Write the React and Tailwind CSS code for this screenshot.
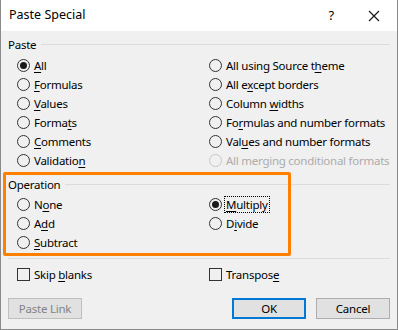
import React from "react";

const U = ({ children }) => <span className="underline underline-offset-[2px] decoration-[1px]">{children}</span>;

function Radio({ children, checked, disabled, focus }) {
  return (
    <div className="flex items-center h-[19px] whitespace-nowrap">
      <div
        className={
          "w-[13px] h-[13px] rounded-full border flex items-center justify-center shrink-0 " +
          (disabled ? "border-[#c8c8c8]" : "border-[#333333]")
        }
      >
        {checked && <div className="w-[7px] h-[7px] rounded-full bg-[#1a1a1a]" />}
      </div>
      <span
        className={
          "leading-[15px] " +
          (disabled ? "text-[#acacac] " : "text-black ") +
          (focus ? "outline outline-1 outline-dotted outline-black px-[1px] ml-[3px]" : "ml-[4px]")
        }
      >
        {children}
      </span>
    </div>
  );
}

function Check({ children }) {
  return (
    <div className="flex items-center h-[19px] whitespace-nowrap">
      <div className="w-[13px] h-[13px] border border-[#333333] shrink-0" />
      <span className="ml-[4px] leading-[15px]">{children}</span>
    </div>
  );
}

function GroupLabel({ children }) {
  return (
    <div className="flex items-center h-[18px] pl-[7px] pr-[7px]">
      <span className="leading-[15px]">{children}</span>
      <div className="flex-1 h-px bg-[#dcdcdc] ml-[5px]" />
    </div>
  );
}

export default function App() {
  return (
    <div
      className="relative w-[398px] h-[330px] bg-[#f0f0f0] border-x border-b border-[#8a8a8a] text-[11.5px] tracking-[-0.25px] text-black flex flex-col overflow-hidden"
      style={{ fontFamily: '"Noto Sans", "Open Sans", sans-serif' }}
    >
      {/* Title bar */}
      <div className="h-[31px] bg-white flex items-center shrink-0">
        <span className="ml-[8px] text-[12.5px] tracking-normal">Paste Special</span>
        <div className="flex-1" />
        <span className="text-[13px] mr-[34px]">?</span>
        <svg width="12" height="12" viewBox="0 0 12 12" className="mr-[17px]">
          <path d="M1 1 L11 11 M11 1 L1 11" stroke="#111" strokeWidth="1.1" fill="none" />
        </svg>
      </div>

      <div className="mt-[4px]">
        <GroupLabel>Paste</GroupLabel>
      </div>
      <div className="mt-[3px] grid grid-cols-[192px_1fr] pl-[16px]">
        <div className="flex flex-col">
          <Radio checked><U>A</U>ll</Radio>
          <Radio><U>F</U>ormulas</Radio>
          <Radio><U>V</U>alues</Radio>
          <Radio>Forma<U>t</U>s</Radio>
          <Radio><U>C</U>omments</Radio>
          <Radio>Validatio<U>n</U></Radio>
        </div>
        <div className="flex flex-col">
          <Radio>All using Source t<U>h</U>eme</Radio>
          <Radio>All e<U>x</U>cept borders</Radio>
          <Radio>Column <U>w</U>idths</Radio>
          <Radio>Fo<U>r</U>mulas and number formats</Radio>
          <Radio>Val<U>u</U>es and number formats</Radio>
          <Radio disabled>All merging conditional formats</Radio>
        </div>
      </div>

      <div className="mt-[5px]">
        <GroupLabel>Operation</GroupLabel>
      </div>
      <div className="mt-[2px] grid grid-cols-[192px_1fr] pl-[16px]">
        <div className="flex flex-col">
          <Radio>N<U>o</U>ne</Radio>
          <Radio>A<U>d</U>d</Radio>
          <Radio><U>S</U>ubtract</Radio>
        </div>
        <div className="flex flex-col">
          <Radio checked focus><U>M</U>ultiply</Radio>
          <Radio>D<U>i</U>vide</Radio>
        </div>
      </div>

      <div className="mt-[6px] mx-[7px] h-px bg-[#dcdcdc]" />

      <div className="mt-[6px] grid grid-cols-[192px_1fr] pl-[16px]">
        <Check>Skip <U>b</U>lanks</Check>
        <Check>Transpos<U>e</U></Check>
      </div>

      <div className="mt-[14px] flex items-center px-[7px]">
        <div className="w-[74px] h-[21px] bg-[#e1e1e1] border border-[#bfbfbf] flex items-center justify-center text-[#838383]">
          Paste Link
        </div>
        <div className="flex-1" />
        <div className="w-[74px] h-[21px] bg-[#e1e1e1] border-2 border-[#0078d7] flex items-center justify-center">
          OK
        </div>
        <div className="ml-[10px] w-[74px] h-[21px] bg-[#e1e1e1] border border-[#adadad] flex items-center justify-center">
          Cancel
        </div>
      </div>

      {/* Orange highlight overlay */}
      <div className="absolute left-[2px] top-[172px] w-[288px] h-[84px] border-[3px] border-[#ff8000] rounded-[2px] pointer-events-none" />
    </div>
  );
}
